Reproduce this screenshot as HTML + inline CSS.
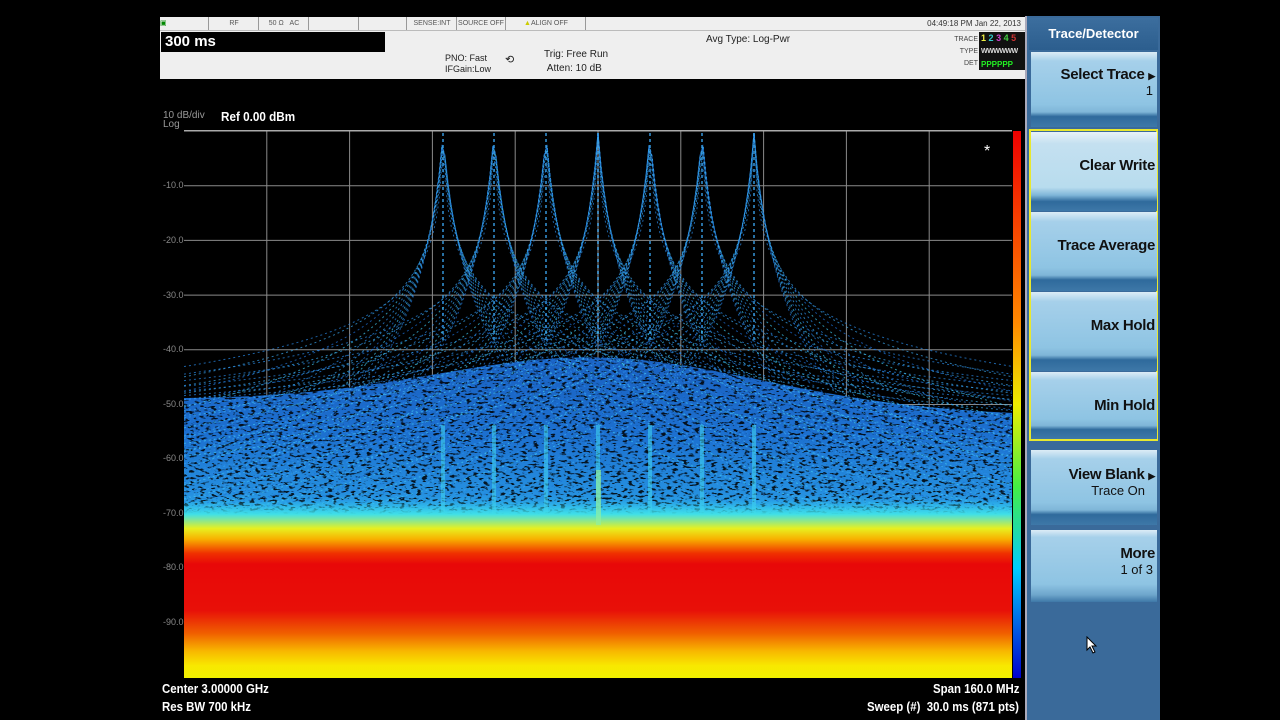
<!DOCTYPE html>
<html><head><meta charset="utf-8"><style>
body{margin:0;width:1280px;height:720px;background:#000;overflow:hidden;position:relative;font-family:"Liberation Sans",sans-serif}
.a{position:absolute;white-space:nowrap}
.top{position:absolute;left:160px;top:17px;width:865px;height:62px;background:#efefef}
.cell{position:absolute;top:0;height:13px;border-right:1px solid #999;font-size:7px;color:#555;line-height:13px;text-align:center;white-space:nowrap;overflow:hidden}
.k{position:absolute;left:1031px;width:126px;background:linear-gradient(#dcecf6 0,#a6d0ea 12%,#8ec4e3 70%,#7fb6d8 80%,#2f6a9c 86%,#3e78a8 100%);font-weight:bold;text-align:right;color:#111}
.k b{display:block;font-size:15px;padding-right:2px;letter-spacing:-.3px}
.k i{font-style:normal;font-weight:normal;display:block;font-size:13px;padding-right:4px}
.yl{position:absolute;left:163px;font-size:9px;color:#888}
.bt{position:absolute;color:#fff;font-weight:bold;font-size:13px;transform:scaleX(.88);transform-origin:left}
</style></head><body>
<div class="top">
 <div style="position:absolute;left:0;top:0;width:865px;height:13px;border-bottom:1px solid #bbb"></div>
 <div class="cell" style="left:0;width:48px;text-align:left;color:#080">▣</div>
 <div class="cell" style="left:50px;width:48px">RF</div>
 <div class="cell" style="left:100px;width:48px">50 Ω &nbsp; AC</div>
 <div class="cell" style="left:150px;width:48px"></div>
 <div class="cell" style="left:200px;width:46px"></div>
 <div class="cell" style="left:248px;width:48px">SENSE:INT</div>
 <div class="cell" style="left:297px;width:48px">SOURCE OFF</div>
 <div class="cell" style="left:347px;width:78px"><span style="color:#cc0">▲</span>ALIGN OFF</div>
 <div class="a" style="right:4px;top:2px;font-size:8px;color:#333">04:49:18 PM Jan 22, 2013</div>
 <div class="a" style="left:1px;top:15px;width:224px;height:20px;background:#000;color:#fff;font-weight:bold;font-size:15px;line-height:20px;padding-left:4px;box-sizing:border-box">300 ms</div>
 <div class="a" style="left:285px;top:36px;font-size:9px;color:#222;line-height:11px">PNO: Fast<br>IFGain:Low</div>
 <div class="a" style="left:345px;top:36px;font-size:11px;color:#222">⟲</div>
 <div class="a" style="left:384px;top:31px;font-size:10px;color:#222;line-height:14px">Trig: Free Run<br>&nbsp;Atten: 10 dB</div>
 <div class="a" style="left:546px;top:17px;font-size:10px;color:#222">Avg Type: Log-Pwr</div>
 <div class="a" style="left:790px;top:17px;font-size:7px;color:#444;text-align:right;line-height:12px;width:28px">TRACE<br>TYPE<br>DET</div>
 <div class="a" style="left:819px;top:15px;width:44px;height:38px;background:#111;font-size:9px;font-weight:bold;line-height:12px;padding-left:2px;overflow:hidden"><span style="color:#ee4">1</span> <span style="color:#3cc">2</span> <span style="color:#c4c">3</span> <span style="color:#4c4">4</span> <span style="color:#c33">5</span><br><span style="color:#ddd;font-size:7px;letter-spacing:-.5px">WWWWWW</span><br><span style="color:#2e2;font-size:8px">PPPPPP</span></div>
</div>
<div class="a" style="left:163px;top:111px;font-size:10px;color:#999;line-height:9px">10 dB/div<br>Log</div>
<div class="a" style="left:221px;top:109px;font-size:13px;color:#fff;font-weight:bold;transform:scaleX(.9);transform-origin:left">Ref 0.00 dBm</div>
<div class="yl" style="top:180px">-10.0</div><div class="yl" style="top:235px">-20.0</div><div class="yl" style="top:290px">-30.0</div><div class="yl" style="top:344px">-40.0</div><div class="yl" style="top:399px">-50.0</div><div class="yl" style="top:453px">-60.0</div><div class="yl" style="top:508px">-70.0</div><div class="yl" style="top:562px">-80.0</div><div class="yl" style="top:617px">-90.0</div>
<svg id="sv" class="a" style="left:0;top:0" width="1280" height="720">
<defs>
<linearGradient id="bg" x1="0" y1="350" x2="0" y2="520" gradientUnits="userSpaceOnUse">
<stop offset="0" stop-color="#1a60c0"/><stop offset=".5" stop-color="#1c70d0"/><stop offset=".85" stop-color="#2590e0"/><stop offset="1" stop-color="#30c0f0"/></linearGradient>
<linearGradient id="hot" x1="0" y1="500" x2="0" y2="678" gradientUnits="userSpaceOnUse">
<stop offset="0" stop-color="#30c0f0" stop-opacity="0"/><stop offset=".08" stop-color="#40e0e8"/><stop offset=".16" stop-color="#e8f020"/><stop offset=".22" stop-color="#f8b000"/><stop offset=".3" stop-color="#f03000"/><stop offset=".36" stop-color="#e80808"/><stop offset=".62" stop-color="#e81008"/><stop offset=".75" stop-color="#f06000"/><stop offset=".85" stop-color="#f8b800"/><stop offset=".93" stop-color="#f8e800"/><stop offset="1" stop-color="#f0f000"/></linearGradient>
<linearGradient id="cb" x1="0" y1="0" x2="0" y2="1"><stop offset="0" stop-color="#e00"/><stop offset=".35" stop-color="#f80"/><stop offset=".5" stop-color="#ee0"/><stop offset=".65" stop-color="#4e4"/><stop offset=".8" stop-color="#0cf"/><stop offset="1" stop-color="#00c"/></linearGradient>
<filter id="nz" x="0" y="0" width="1" height="1"><feTurbulence type="fractalNoise" baseFrequency=".18 .45" numOctaves="2" seed="3"/><feColorMatrix type="matrix" values="0 0 0 0 0  0 0 0 0 0  0 0 0 0 0  0 0 0 -9 4.0"/></filter>
<clipPath id="pc"><rect x="184" y="131" width="828" height="547"/></clipPath>
</defs>
<rect x="184" y="131" width="828" height="547" fill="#000"/>
<g id="grid" stroke="#8a8a8a" stroke-width="1"></g>
<g id="spec" clip-path="url(#pc)"></g>
<rect x="1013" y="131" width="8" height="547" fill="url(#cb)"/>
<rect x="184" y="130" width="828" height="1.5" fill="#aaa"/>
<text x="984" y="156" fill="#fff" font-size="16" font-family="Liberation Sans">*</text>
</svg>
<div class="bt" style="left:162px;top:681px">Center 3.00000 GHz</div>
<div class="bt" style="left:162px;top:699px">Res BW 700 kHz</div>
<div class="bt" style="left:933px;top:681px">Span 160.0 MHz</div>
<div class="bt" style="left:867px;top:699px">Sweep (#) &nbsp;30.0 ms (871 pts)</div>
<div class="a" style="left:1025px;top:16px;width:135px;height:704px;background:#3a6a9a;border-left:2px solid #aab;box-sizing:border-box"></div>
<div class="a" style="left:1029px;top:18px;width:129px;height:32px;background:linear-gradient(#3c6e9e,#2c5e8e);color:#fff;font-weight:bold;font-size:13px;text-align:center;line-height:32px">Trace/Detector</div>
<div class="k" style="top:52px;height:75px"><b style="margin-top:14px">Select Trace <span style="font-size:9px">▶</span></b><i>1</i></div>
<div class="a" style="left:1029px;top:129px;width:129px;height:312px;border:2px solid #e8e830;box-sizing:border-box"></div>
<div class="k" style="top:132px;height:79px;background:linear-gradient(#e8f2f8 0,#c4e0f0 15%,#b8dcee 70%,#7fb6d8 80%,#2f6a9c 88%,#3e78a8 100%)"><b style="margin-top:25px">Clear Write</b></div>
<div class="k" style="top:212px;height:79px"><b style="margin-top:25px">Trace Average</b></div>
<div class="k" style="top:292px;height:79px"><b style="margin-top:25px">Max Hold</b></div>
<div class="k" style="top:372px;height:67px"><b style="margin-top:25px">Min Hold</b></div>
<div class="k" style="top:450px;height:75px"><b style="margin-top:16px">View Blank <span style="font-size:9px">▶</span></b><i style="padding-right:12px">Trace On</i></div>
<div class="k" style="top:530px;height:72px;background:linear-gradient(#dcecf6 0,#a6d0ea 10%,#8ec4e3 75%,#6ea6cc 90%,#3e78a8 100%)"><b style="margin-top:15px">More</b><i>1 of 3</i></div>
<svg class="a" style="left:1086px;top:636px" width="12" height="18"><path d="M1 1 L1 14 L4 11 L7 17 L9 16 L6 10 L10 10 Z" fill="#fff" stroke="#000" stroke-width="1"/></svg>
<script>
var NS="http://www.w3.org/2000/svg";
function el(p,t,a){var e=document.createElementNS(NS,t);for(var k in a)e.setAttribute(k,a[k]);p.appendChild(e);return e;}
var g=document.getElementById('grid');
for(var i=1;i<10;i++){var x=184+i*82.8;el(g,'line',{x1:x,y1:131,x2:x,y2:678});}
for(var i=1;i<10;i++){var y=131+i*54.7;el(g,'line',{x1:184,y1:y,x2:1012,y2:y});}
var s=document.getElementById('spec');
var P=[443,494,546,598,650,702,754];
function cy(x,c,A,w){return 133+A*Math.log(1+Math.abs(x-c)/w);}
var d="M184 678";
for(var x=184;x<=1012;x+=4){var t=(x-598)/230;var m=400+(x-184)*0.018-50*Math.exp(-t*t);d+=" L"+x+" "+m.toFixed(1);}
d+=" L1012 678 Z";
el(s,'path',{d:d,fill:'url(#bg)'});
var cp=el(s,'clipPath',{id:'ec'});el(cp,'path',{d:d});
el(s,'rect',{x:184,y:330,width:828,height:200,filter:'url(#nz)','clip-path':'url(#ec)',opacity:.85});
var cols=['#2a8ae8','#3aa8f0','#1e70d8','#40c8f0'];
for(var j=0;j<P.length;j++){var c=P[j];
 for(var k=0;k<11;k++){var A=42+k*7,w=1.0+k*0.8;var dd="";
  for(var x=184;x<=1012;x+=3){var y=cy(x,c,A,w);if(y>520)y=520;dd+=(dd?" L":"M")+x+" "+y.toFixed(1);}
  el(s,'path',{d:dd,fill:'none',stroke:cols[k%4],'stroke-width':1,'stroke-dasharray':'2 3',opacity:.7});}
 el(s,'line',{x1:c,y1:133,x2:c,y2:340,stroke:'#3aa0e8','stroke-width':2,'stroke-dasharray':'3 3',opacity:.7});
 el(s,'rect',{x:c-2,y:425,width:4,height:100,fill:'#40d0f0',opacity:.6});
}
el(s,'rect',{x:184,y:500,width:828,height:178,fill:'url(#hot)'});
el(s,'rect',{x:596,y:470,width:5,height:55,fill:'#90f0a0',opacity:.7});
</script>
</body></html>
